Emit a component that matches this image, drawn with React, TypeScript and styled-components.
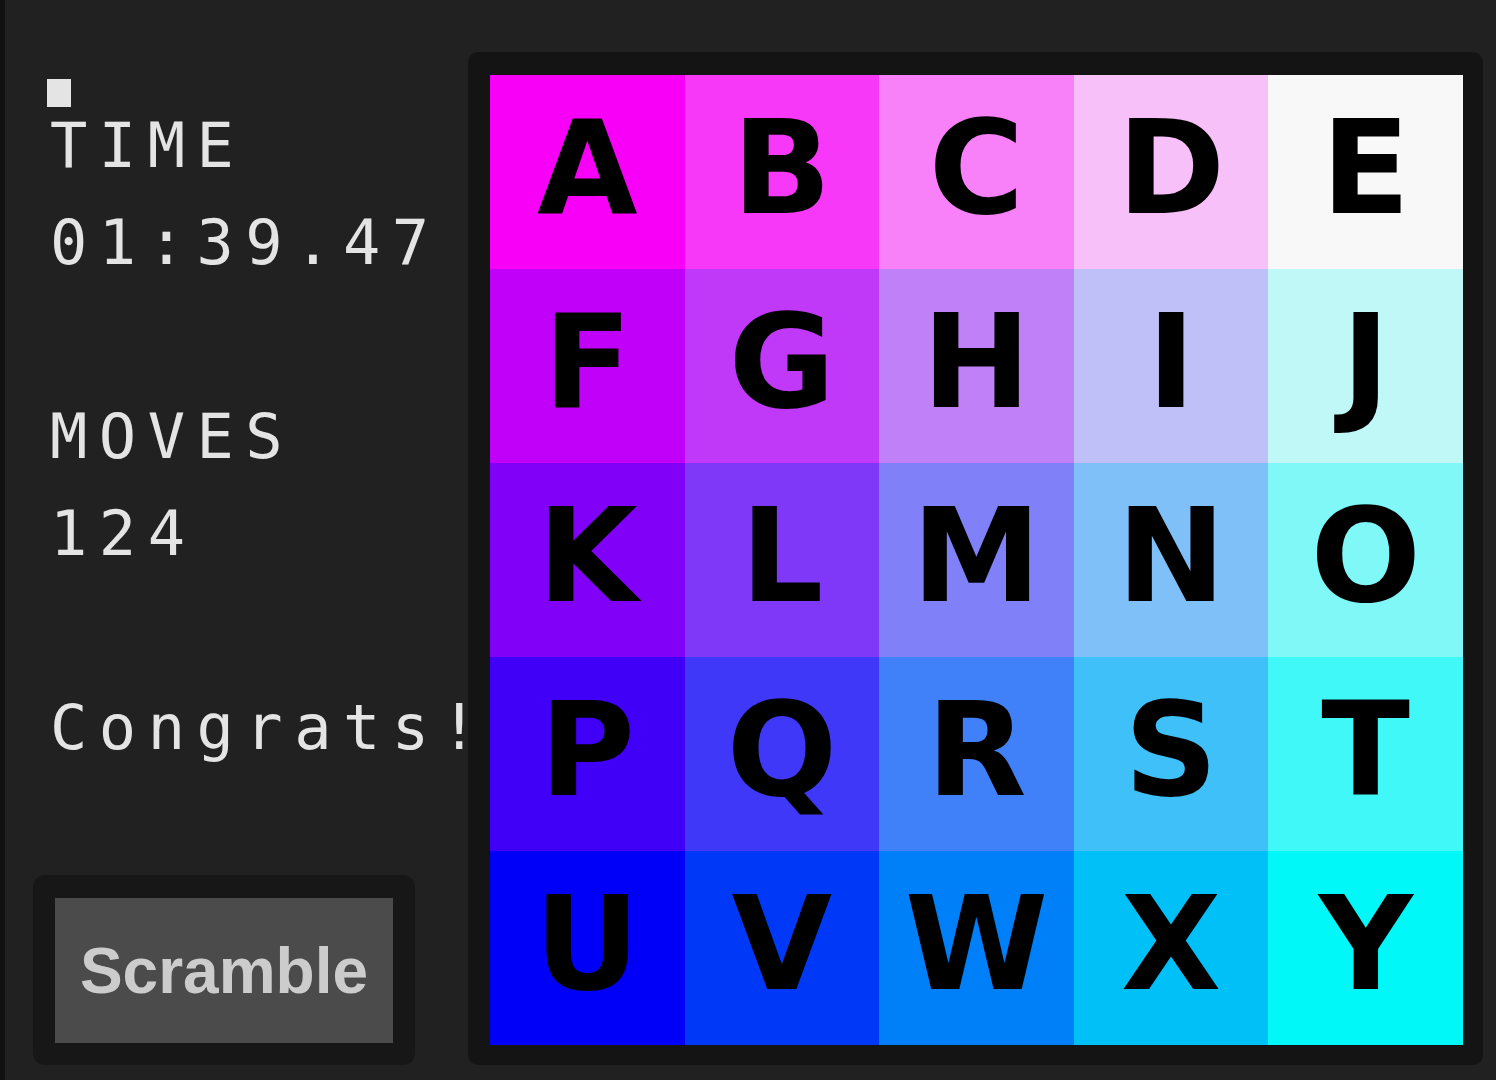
import styled, { createGlobalStyle } from "styled-components";

const GlobalStyle = createGlobalStyle`
  html, body {
    margin: 0;
    padding: 0;
    background: #212121;
  }
  * {
    box-sizing: border-box;
  }
`;

// red follows the row, green follows the column, blue is always up
const ROW_RED = ["f8", "c0", "80", "40", "00"];
const COL_GREEN = ["00", "38", "80", "c0", "f8"];
const LETTERS = "ABCDEFGHIJKLMNOPQRSTUVWXY".split("");

const Page = styled.div`
  display: flex;
  width: 1496px;
  height: 1080px;
  background: #212121;
  border-left: 5px solid #111111;
  overflow: hidden;
`;

const Sidebar = styled.aside`
  width: 463px;
  flex-shrink: 0;
  display: flex;
  flex-direction: column;
  padding-left: 45px;
  padding-bottom: 15px;
`;

const Cursor = styled.div`
  width: 24px;
  height: 28px;
  margin: 79px 0 -10px -3px;
  background: #e4e4e4;
`;

const Line = styled.div`
  height: 97px;
  line-height: 97px;
  font-family: "DejaVu Sans Mono", "Liberation Mono", monospace;
  font-size: 62px;
  letter-spacing: 11.5px;
  color: #e4e4e4;
  white-space: nowrap;
`;

const ButtonWell = styled.div`
  margin-top: auto;
  margin-left: -17px;
  width: 382px;
  height: 190px;
  padding: 23px 22px 22px 22px;
  background: #171717;
  border-radius: 12px;
`;

const ScrambleButton = styled.button`
  width: 100%;
  height: 100%;
  border: none;
  padding: 0;
  background: #4b4b4b;
  color: #cccccc;
  font-family: "Liberation Sans", Arial, sans-serif;
  font-weight: 700;
  font-size: 64px;
  cursor: pointer;
`;

const Board = styled.div`
  width: 1015px;
  height: 1013px;
  margin-top: 52px;
  padding: 23px 20px 20px 22px;
  background: #141414;
  border-radius: 10px;
`;

const Grid = styled.div`
  width: 100%;
  height: 100%;
  display: grid;
  grid-template-columns: repeat(5, 1fr);
  grid-template-rows: repeat(5, 1fr);
`;

const Tile = styled.div<{ $bg: string }>`
  display: flex;
  align-items: center;
  justify-content: center;
  padding-bottom: 8px;
  background: ${({ $bg }) => $bg};
  color: #000;
  font-family: "DejaVu Sans", Verdana, sans-serif;
  font-weight: 700;
  font-size: 130px;
  line-height: 1;
`;

export default function App() {
  return (
    <>
      <GlobalStyle />
      <Page>
        <Sidebar>
          <Cursor />
          <Line>TIME</Line>
          <Line>01:39.47</Line>
          <Line />
          <Line>MOVES</Line>
          <Line>124</Line>
          <Line />
          <Line>Congrats!</Line>
          <ButtonWell>
            <ScrambleButton>Scramble</ScrambleButton>
          </ButtonWell>
        </Sidebar>
        <Board>
          <Grid>
            {LETTERS.map((letter, i) => {
              const row = Math.floor(i / 5);
              const col = i % 5;
              return (
                <Tile key={letter} $bg={`#${ROW_RED[row]}${COL_GREEN[col]}f8`}>
                  {letter}
                </Tile>
              );
            })}
          </Grid>
        </Board>
      </Page>
    </>
  );
}
